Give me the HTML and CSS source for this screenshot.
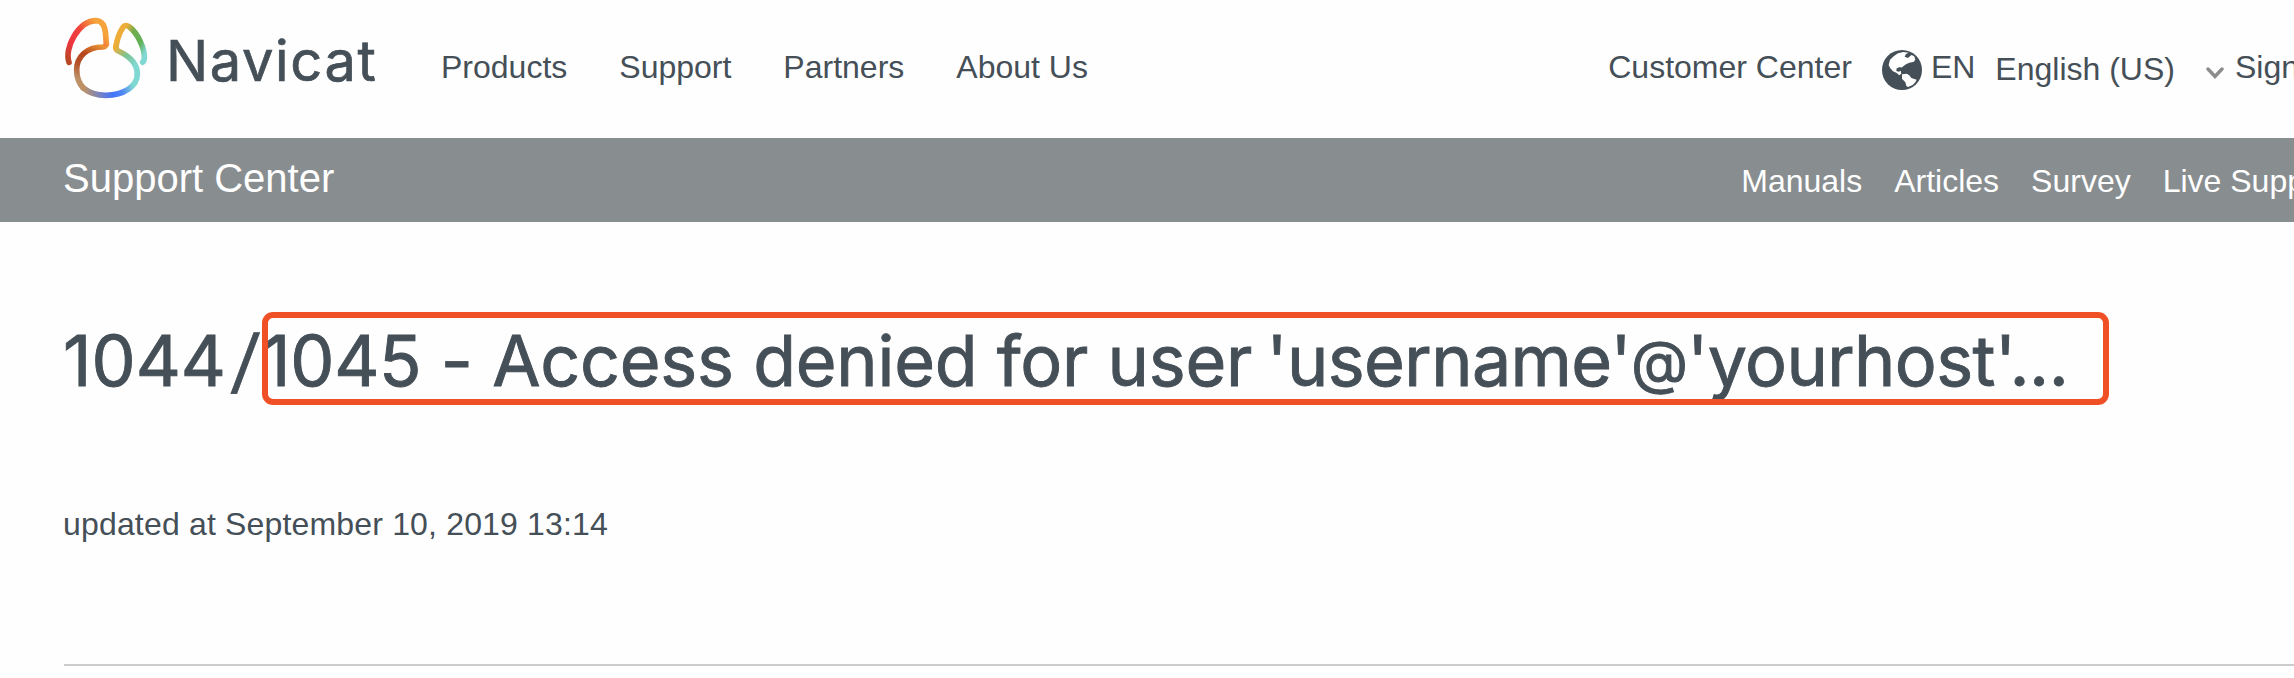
FILE: index.html
```html
<!DOCTYPE html>
<html lang="en">
	<head>
		<title>Navicat Support Center</title>
		<meta charset="UTF-8">
		<link rel="stylesheet" href="styles.css">
	</head>
	<body>
		<header class="header">
			<a class="logo" href="#">
				<svg class="logo-mark" viewBox="36 48 264 252" fill="none" stroke-width="17" stroke-linecap="round" stroke-linejoin="round">
					<defs>
						<linearGradient id="earLeft" gradientUnits="userSpaceOnUse" x1="50" y1="190" x2="172" y2="100">
							<stop offset="0" stop-color="#b04a20"/>
							<stop offset=".3" stop-color="#ee3540"/>
							<stop offset=".6" stop-color="#f0423c"/>
							<stop offset=".95" stop-color="#f5a33a"/>
						</linearGradient>
						<linearGradient id="faceLeft" gradientUnits="userSpaceOnUse" x1="170" y1="135" x2="105" y2="270">
							<stop offset="0" stop-color="#f5a33a"/>
							<stop offset=".35" stop-color="#b5451c"/>
							<stop offset=".6" stop-color="#b5532b"/>
							<stop offset=".85" stop-color="#bd9065"/>
						</linearGradient>
						<linearGradient id="faceBottom" gradientUnits="userSpaceOnUse" x1="100" y1="270" x2="262" y2="230">
							<stop offset="0" stop-color="#bd9468"/>
							<stop offset=".3" stop-color="#6f80cc"/>
							<stop offset=".5" stop-color="#4474fb"/>
							<stop offset=".68" stop-color="#5288f3"/>
							<stop offset=".88" stop-color="#80d8d2"/>
						</linearGradient>
						<linearGradient id="faceRight" gradientUnits="userSpaceOnUse" x1="256" y1="195" x2="198" y2="140">
							<stop offset="0" stop-color="#80d8d2"/>
							<stop offset=".5" stop-color="#7cc391"/>
							<stop offset="1" stop-color="#f0ae38"/>
						</linearGradient>
						<linearGradient id="earRight" gradientUnits="userSpaceOnUse" x1="195" y1="135" x2="285" y2="180">
							<stop offset=".05" stop-color="#eead38"/>
							<stop offset=".3" stop-color="#72ad4d"/>
							<stop offset=".65" stop-color="#60b054"/>
							<stop offset=".9" stop-color="#80d8d2"/>
						</linearGradient>
					</defs>
					<path stroke="url(#faceBottom)" d="M100 264C118 279 142 286 168 286C220 286 262 260 262 222"/>
					<path stroke="url(#faceRight)" d="M262 222C262 192 237 168 205 153Q195 148 198 138"/>
					<path stroke="url(#faceLeft)" d="M169 132Q168 140 158 141C110 141 80 170 80 210C80 232 87 250 100 264"/>
					<path stroke="url(#earLeft)" d="M57 187C42 145 85 62 138 62C168 63 167 100 169 132"/>
					<path stroke="url(#earRight)" d="M198 138C202 115 210 95 219 82Q227 72 237 80C262 98 285 145 283 175Q282 185 278 187"/>
				</svg>
				<span class="logo-text">Navicat</span>
			</a>
			<nav class="main-nav">
				<a href="#">Products</a>
				<a href="#">Support</a>
				<a href="#">Partners</a>
				<a href="#">About Us</a>
			</nav>
			<div class="user-nav">
				<a class="customer" href="#">Customer Center</a>
				<svg class="globe" viewBox="0 0 120 120">
					<circle cx="60" cy="60" r="60" fill="#454f57"/>
					<path fill="#fff" d="M24 29L36 18L48 10L64 6L80 8L72 12L68 20L78 24L88 15L96 18L100 28L96 35L82 38L72 43L58 53L54 51L44 55L43 63L50 65L56 62L58 71L52 76L44 69L33 64L25 55L20 46L22 37Z"/>
					<path fill="#fff" d="M60 73L74 71L82 76L88 84L104 89L100 97L92 105L78 111L73 108L70 97L60 86Z"/>
				</svg>
				<span>EN</span>
				<span class="language">English (US)</span>
				<svg class="chevron" viewBox="0 0 18 12"><path d="M2 2L9 9.5L16 2" fill="none" stroke="#8c8c8c" stroke-width="3.4" stroke-linecap="round"/></svg>
				<a href="#">Sign</a>
			</div>
		</header>

		<div class="sub-bar">
			<span class="sub-title">Support Center</span>
			<nav class="sub-nav">
				<a href="#">Manuals</a>
				<a href="#">Articles</a>
				<a href="#">Survey</a>
				<a href="#">Live Supp</a>
			</nav>
		</div>

		<main class="article">
			<h1 class="article-title"><span class="code">1044<span class="slash">/</span></span><span class="marked">1045 - Access denied for user <span class="account">'username'<span class="at">@</span>'yourhost'...</span></span></h1>
			<p class="updated">updated at September 10, 2019 13:14</p>
			<hr>
		</main>
	</body>
</html>
```
FILE: styles.css
```css
*{
	box-sizing:border-box;
}
body{
	margin:0;
	height:678px;
	overflow:hidden;
	background-color:#fefefe;
	color:#454f57;
	font-family:"Liberation Sans", Arial, sans-serif;
	font-size:32px;
	white-space:nowrap;
}
a{
	color:inherit;
	text-decoration:none;
}
.header{
	display:flex;
	align-items:center;
	height:138px;
	padding:0 0 4px 62px;
}
.logo{
	display:flex;
	align-items:center;
	width:379px;
	height:134px;
}
.logo-mark{
	width:88px;
	height:84px;
	margin-bottom:18px;
}
.logo-text{
	margin:0 0 13px 16px;
	font-family:Inter, sans-serif;
	font-size:56px;
	line-height:68px;
	letter-spacing:1.6px;
	-webkit-text-stroke:.7px #454f57;
}
.main-nav{
	display:flex;
	gap:52px;
}
.user-nav{
	display:flex;
	align-items:center;
	margin-left:auto;
	margin-right:-5px;
}
.customer{
	margin-right:30px;
}
.globe{
	width:40px;
	height:40px;
	margin:6px 9px 0 0;
}
.language{
	margin:4px 0 0 20px;
}
.chevron{
	width:18px;
	height:12px;
	margin:12px 11px 0 31px;
}
.sub-bar{
	display:flex;
	align-items:baseline;
	height:84px;
	padding-left:63px;
	background-color:#888d90;
	color:#fff;
}
.sub-title{
	font-size:40px;
	line-height:80px;
}
.sub-nav{
	display:flex;
	gap:32px;
	margin-left:auto;
	margin-right:-11px;
}
.article{
	padding:90px 0 0 63px;
}
.article-title{
	display:flex;
	height:93px;
	margin:0;
	font-family:Inter, sans-serif;
	font-size:70px;
	font-weight:400;
	line-height:97px;
	-webkit-text-stroke:.9px #454f57;
}
.code{
	width:199px;
}
.slash{
	display:inline-block;
	margin-left:7px;
	transform:skewX(-6deg);
}
.marked{
	position:relative;
	width:1847px;
	height:93px;
	letter-spacing:-.25px;
}
/* red frame drawn over the error message */
.marked::after{
	content:"";
	position:absolute;
	inset:0;
	border:6px solid #f05025;
	border-radius:11px;
}
.account{
	margin-left:-5px;
	letter-spacing:-.6px;
}
.at{
	font-size:59px;
	line-height:1;
	vertical-align:3px;
}
.updated{
	margin:101px 0 0;
	line-height:36px;
	letter-spacing:.17px;
}
hr{
	height:2px;
	margin:122px 0 0 1px;
	border:0;
	background-color:#ccc;
}
```
